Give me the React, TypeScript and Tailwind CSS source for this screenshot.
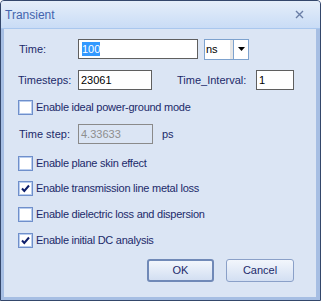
import React from 'react';

const font = { fontFamily: '"Liberation Sans", Arial, sans-serif' };

function Check({ checked, label }: { checked?: boolean; label: string }) {
  return (
    <div className="flex items-center h-[15px]">
      <div className="w-[15px] h-[15px] border border-[#6f8fcb] bg-[#b9cdee] p-[1px]">
        <div className="w-full h-full bg-white flex items-center justify-center">
          {checked && (
            <svg width="9" height="9" viewBox="0 0 9 9">
              <path d="M1 4.5 L3.3 7 L8 1.5" stroke="#0f1f6b" strokeWidth="2" fill="none" />
            </svg>
          )}
        </div>
      </div>
      <span className="ml-[3px] text-[11px] tracking-[-0.25px] text-[#1c2a6a]">{label}</span>
    </div>
  );
}

function Field({ value, w, disabled }: { value: string; w: string; disabled?: boolean }) {
  return (
    <div
      className={`${w} h-[20px] flex items-center pl-[2px] text-[11px] border ${
        disabled ? 'border-[#8a8a8a] bg-[#dbe5f4] text-[#8e8e8e]' : 'border-[#5f5f5f] bg-white text-black'
      }`}
    >
      {value}
    </div>
  );
}

export default function App() {
  return (
    <div style={font} className="w-[321px] h-[301px] border border-[#34476b] rounded-t-[4px] flex flex-col overflow-hidden bg-[#a6bee3]">
      <div className="h-[28px] flex items-center justify-between pl-[4px] pr-[16px] bg-gradient-to-b from-[#e5eef9] to-[#c9dcf6] border-b border-[#a9c7ee]">
        <span className="text-[12px] text-[#4364ad]">Transient</span>
        <svg width="9" height="9" viewBox="0 0 9 9">
          <path d="M1 1 L8 8 M8 1 L1 8" stroke="#6a7ea6" strokeWidth="1.4" />
        </svg>
      </div>
      <div className="flex-1 ml-[3px] mr-[4px] mb-[3px] bg-[#dbe5f4] flex flex-col pl-[14px] pt-[10px] text-[11px] text-[#1c2a6a]">
        <div className="flex items-center h-[20px]">
          <span className="w-[60px] pl-[1px]">Time:</span>
          <div className="w-[120px] h-[20px] flex items-center pl-[3px] border border-[#5f5f5f] bg-white">
            <span className="bg-[#3399ff] text-white leading-[14px]">100</span>
          </div>
          <div className="ml-[6px] w-[45px] h-[21px] border border-[#7da2ce] bg-white flex">
            <span className="flex-1 pl-[1px] text-black flex items-center">ns</span>
            <div className="w-[3px] bg-[#e6e6e6]" />
            <div className="w-[15px] border-l border-[#7da2ce] flex items-center justify-center">
              <svg width="7" height="4" viewBox="0 0 7 4">
                <path d="M0 0 L7 0 L3.5 4 Z" fill="#000" />
              </svg>
            </div>
          </div>
        </div>
        <div className="flex items-center h-[20px] mt-[11px]">
          <span className="w-[60px]">Timesteps:</span>
          <Field value="23061" w="w-[74px]" />
          <span className="ml-[25px] w-[79px]">Time_Interval:</span>
          <Field value="1" w="w-[38px]" />
        </div>
        <div className="mt-[10px]">
          <Check label="Enable ideal power-ground mode" />
        </div>
        <div className="flex items-center h-[20px] mt-[9px]">
          <span className="w-[60px] pl-[1px]">Time step:</span>
          <Field value="4.33633" w="w-[75px]" disabled />
          <span className="ml-[9px]">ps</span>
        </div>
        <div className="mt-[12px]">
          <Check label="Enable plane skin effect" />
        </div>
        <div className="mt-[10px]">
          <Check checked label="Enable transmission line metal loss" />
        </div>
        <div className="mt-[11px]">
          <Check label="Enable dielectric loss and dispersion" />
        </div>
        <div className="mt-[11px]">
          <Check checked label="Enable initial DC analysis" />
        </div>
        <div className="mt-[11px] flex justify-end pr-[22px] gap-[12px]">
          <button className="w-[67px] h-[23px] rounded-[3px] border-2 border-[#7089b7] bg-gradient-to-b from-[#f2f6fc] to-[#d3dff2] text-[11px] text-[#1c2a6a]">
            OK
          </button>
          <button className="w-[68px] h-[23px] rounded-[3px] border border-[#8aa0c8] bg-gradient-to-b from-[#f2f6fc] to-[#d3dff2] text-[11px] text-[#1c2a6a]">
            Cancel
          </button>
        </div>
      </div>
    </div>
  );
}
